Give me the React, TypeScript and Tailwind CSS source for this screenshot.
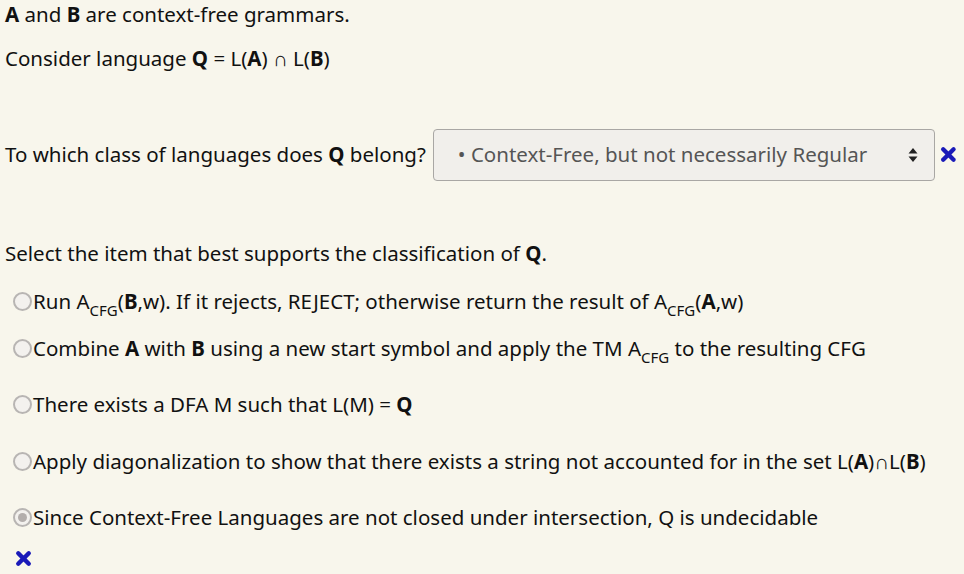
import { X } from 'lucide-react';

const Radio = ({ checked }: { checked?: boolean }) => (
  <span className="inline-flex items-center justify-center w-[19px] h-[19px] rounded-full border-2 border-[#b8b5b3] bg-[#f3f1ee] mr-[1px] shrink-0">
    {checked && <span className="w-[9px] h-[9px] rounded-full bg-[#b3aeac]" />}
  </span>
);

const Sub = ({ children }: { children: React.ReactNode }) => (
  <sub className="text-[15px] align-[-3px]">{children}</sub>
);

const options: { content: React.ReactNode; checked?: boolean; mt: string }[] = [
  {
    content: (
      <>
        Run A<Sub>CFG</Sub>(<b>B</b>,w). If it rejects, REJECT; otherwise return the result of A<Sub>CFG</Sub>(<b>A</b>,w)
      </>
    ),
    mt: 'mt-[25px]',
  },
  {
    content: (
      <>
        Combine <b>A</b> with <b>B</b> using a new start symbol and apply the TM A<Sub>CFG</Sub> to the resulting CFG
      </>
    ),
    mt: 'mt-[21px]',
  },
  {
    content: (
      <>
        There exists a DFA M such that L(M) = <b>Q</b>
      </>
    ),
    mt: 'mt-[30px]',
  },
  {
    content: (
      <>
        Apply diagonalization to show that there exists a string not accounted for in the set L(<b>A</b>)∩L(<b>B</b>)
      </>
    ),
    mt: 'mt-[31px]',
  },
  {
    content: <>Since Context-Free Languages are not closed under intersection, Q is undecidable</>,
    checked: true,
    mt: 'mt-[30px]',
  },
];

const Cross = ({ className }: { className?: string }) => (
  <X className={className} strokeWidth={5} color="#1a1ab8" />
);

export default function App() {
  return (
    <div className="w-[964px] h-[574px] bg-[#f8f6ec] text-[#111] overflow-hidden font-['Noto_Sans',sans-serif] text-[20.5px] leading-none whitespace-nowrap">
      <div className="px-[5px] pt-[4px]">
        <p className="h-[24px]">
          <b>A</b> and <b>B</b> are context-free grammars.
        </p>
        <p className="mt-[20px]">
          Consider language <b>Q</b> = L(<b>A</b>) ∩ L(<b>B</b>)
        </p>
        <div className="flex items-center mt-[60px]">
          <span>
            To which class of languages does <b>Q</b> belong?
          </span>
          <div className="ml-[7px] w-[508px] h-[52px] flex items-center justify-between border border-[#a9a7a4] rounded-[4px] bg-[#f1efeb] pl-[24px] pr-[16px] text-[#555]">
            <span>• Context-Free, but not necessarily Regular</span>
            <svg width="10" height="16" viewBox="0 0 10 16">
              <path d="M5 1 L9.5 6.5 H0.5 Z M5 15 L9.5 9.5 H0.5 Z" fill="#222" />
            </svg>
          </div>
          <Cross className="w-[21px] h-[21px] ml-[3px]" />
        </div>
        <p className="mt-[62px]">
          Select the item that best supports the classification of <b>Q</b>.
        </p>
        <div className="flex flex-col pl-[8px]">
          {options.map((o, i) => (
            <div key={i} className={`flex items-center h-[26px] ${o.mt}`}>
              <Radio checked={o.checked} />
              <span>{o.content}</span>
            </div>
          ))}
        </div>
        <Cross className="w-[21px] h-[21px] mt-[18px] ml-[8px]" />
      </div>
    </div>
  );
}
